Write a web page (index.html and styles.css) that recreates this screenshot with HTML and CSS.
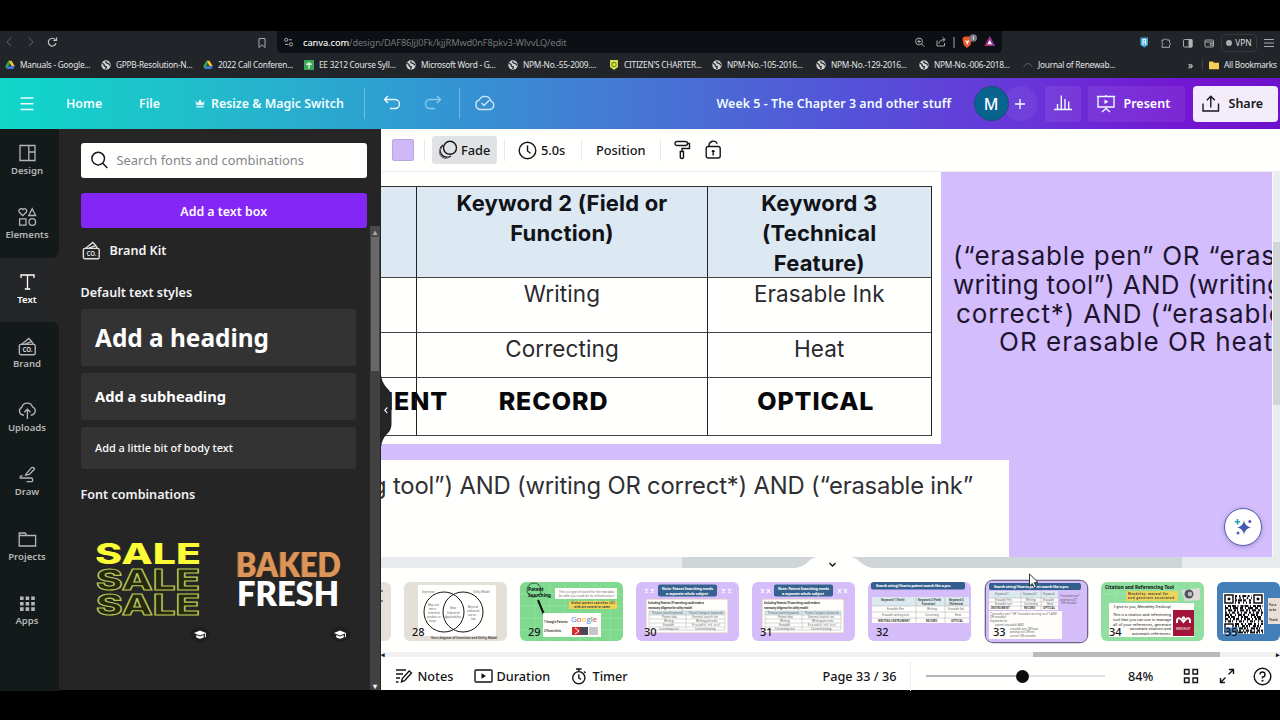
FILE: index.html
```html
<!DOCTYPE html>
<html lang="en">
<head>
<meta charset="utf-8">
<title>Week 5 - The Chapter 3 and other stuff</title>
<link rel="stylesheet" href="styles.css">
</head>
<body>
<svg class="defs" width="0" height="0">
  <defs>
    <symbol id="globe" viewBox="0 0 10 10"><circle cx="5" cy="5" r="4.7" fill="#d0d1d3"/><path d="M1 3.4Q3.5 4 3.2 5.2T5.4 7L4.6 9M5 1.2Q4.6 3 6.2 3.2T9 5.3" fill="none" stroke="#25282c" stroke-width="1.3"/></symbol>
    <symbol id="drive" viewBox="0 0 10 10"><path d="M3.4 .8H6.6L9.8 6.3H6.6Z" fill="#f6c326"/><path d="M3.4 .8L5 3.6L1.8 9L.2 6.3Z" fill="#2ba65a"/><path d="M3.4 6.3H9.8L8.2 9H1.8Z" fill="#3f7be8"/></symbol>
    <symbol id="co" viewBox="0 0 18 18"><rect x="1.3" y="7" width="15" height="9.8" rx="1.5"/><path d="M3.5 6.8L10.2 1.3L13 4.3M6.5 6.8L13 4.3L14.5 6.8"/><text x="9" y="14" class="co-text">CO.</text></symbol>
    <symbol id="cap" viewBox="0 0 22 16"><ellipse cx="11" cy="8" rx="11" ry="8" fill="#1c1e20"/><path d="M4.5 6.3L11 3.6L17.5 6.3L11 9Z" fill="#fff"/><path d="M7 8.5V11Q11 14 15 11V8.5L11 10.2Z" fill="#fff"/><path d="M16.8 6.5V11" stroke="#fff"/></symbol>
    <symbol id="mini-table" viewBox="0 0 82 34"><rect width="82" height="34" fill="#fffefb" stroke="#d9b998" stroke-width=".8"/><text x="2" y="5" textLength="56" class="ink b">Including Patents: IP searching could make a</text><text x="2" y="9.5" textLength="44" class="ink b">necessary diligence for utility model</text><rect x="3" y="12" width="76" height="4" fill="#d8e8ed"/><path d="M3 12H79V31H3ZM40 12V31M3 16H79M3 20H79M3 24H79M3 28H79" fill="none" stroke="#a9b4bb" stroke-width=".5"/><g class="ink"><text x="6" y="15" textLength="31">Previous search keywords</text><text x="43" y="15" textLength="34">Patent Category keywords</text><text x="16" y="19">Patent idea</text><text x="46" y="19" textLength="26">General search set</text><text x="18" y="23">Writing</text><text x="50" y="23">Writing pen sets</text><text x="17" y="27">Erasable</text><text x="46" y="27" textLength="28">Erasable ink tool</text><text x="13" y="30.5">Correcting tool</text><text x="49" y="30.5">Correct heating</text></g></symbol>
  </defs>
</svg>
<div class="screen">
  <header class="browser">
    <div class="nav-row">
      <div class="nav-left">
        <svg width="64" height="20" class="line dim"><path d="M11 6.5L7 10.8L11 15M29 6.5L33 10.8L29 15"/><path d="M55.4 8.8A3.9 3.9 0 1 0 56 12.3M56.5 6.5V9.5H53.3" stroke="#c6c8ca" stroke-width="1.2"/></svg>
        <svg width="12" height="14" class="line bookmark"><path d="M3 2.5H9V11.5L6 8.8L3 11.5Z"/></svg>
      </div>
      <div class="url-bar">
        <svg width="12" height="12" class="line"><circle cx="3.2" cy="3.8" r="1.6"/><path d="M6 3.8H9M2 8.4H5.5"/><circle cx="8" cy="8.4" r="1.6"/></svg>
        <span class="url"><b>canva.com</b>/design/DAF86JjJ0Fk/kjjRMwd0nF8pkv3-WlvvLQ/edit</span>
        <svg width="90" height="22" class="line url-icons"><circle cx="9" cy="10.5" r="3.4"/><path d="M11.6 13L14.2 15.6M7.2 10.5H10.8M9 8.7V12.3"/><path d="M27 9.5V15H34.5V12M29 12.5Q29 9 34.5 8.5M32.6 6.2L35.2 8.5L32.6 10.8"/><path d="M44 6V17"/><path d="M53 6.5L55 5.5H60L62 7.5L60.5 14L57 17L53.6 14L52.5 8Z" fill="#e8572d" stroke="none"/><path d="M55 9L57 10L59.4 9L57.4 14Z" fill="#fff" stroke="none"/><circle cx="63.3" cy="7" r="3.7" fill="#777b80" stroke="none"/><path d="M63.3 5.2V8.8" stroke="#eee"/><path d="M79.7 5L85 15H74.3Z" fill="#b52b74" stroke="none"/><path d="M79.7 5L85 15H79.7Z" fill="#7f3ca0" stroke="none"/><path d="M79.7 9L82 13.3H77.4Z" fill="#fff" stroke="none"/></svg>
      </div>
      <div class="extensions">
        <svg width="82" height="20" class="line"><path d="M3.5 4.5H11V12L7.3 14.5L3.5 12Z" fill="#45a8de" stroke="none"/><path d="M6 6V12M8.6 6V12M6 6.5H8.6M6 9H8.6" stroke="#fff"/><path d="M25 7H27A1.6 1.6 0 0 1 30 7H32.5V9.4A1.6 1.6 0 0 1 32.5 12.2V14.3H25V12.2A1.6 1.6 0 0 0 25 9.4Z"/><rect x="46.5" y="6.5" width="8.5" height="7.5" rx="1"/><path d="M52 6.5H55V14H52Z" fill="#b5b7ba"/><rect x="68" y="7" width="8.5" height="7" rx="1"/><path d="M68 9H76.5M73 10.7H76.5V12.2H73Z"/></svg>
        <span class="vpn"><i></i>VPN</span>
        <svg width="12" height="12" class="line"><path d="M1 2.5H11M1 6H11M1 9.5H11"/></svg>
      </div>
    </div>
    <nav class="bookmarks">
      <a class="w96"><svg><use href="#drive"/></svg>Manuals - Google...</a>
      <a class="w102"><svg><use href="#globe"/></svg>GPPB-Resolution-N...</a>
      <a class="w101"><svg><use href="#drive"/></svg>2022 Call Conferen...</a>
      <a class="w102"><svg viewBox="0 0 10 10"><rect width="10" height="10" fill="#3ca757"/><path d="M2 4.2H8M5 2V8.5" stroke="#fff" stroke-width="1.2"/></svg>EE 3212 Course Syll...</a>
      <a class="w102"><svg><use href="#globe"/></svg>Microsoft Word - G...</a>
      <a class="w101"><svg><use href="#globe"/></svg>NPM-No.-55-2009....</a>
      <a class="w103"><svg viewBox="0 0 10 10"><path d="M1 0H9V7L5 10L1 7Z" fill="#d7dd4a"/><circle cx="5" cy="4.5" r="2.2" fill="none" stroke="#59802e"/></svg>CITIZEN'S CHARTER...</a>
      <a class="w104"><svg><use href="#globe"/></svg>NPM-No.-105-2016...</a>
      <a class="w103"><svg><use href="#globe"/></svg>NPM-No.-129-2016...</a>
      <a class="w104"><svg><use href="#globe"/></svg>NPM-No.-006-2018...</a>
      <a class="w160"><svg viewBox="0 0 10 10"><path d="M.5 7Q5 0 9.5 7" fill="none" stroke="#5b5e61"/></svg>Journal of Renewab...</a>
      <span class="more">»</span>
      <a class="all"><svg viewBox="0 0 10 10"><path d="M0 1.5H4L5 2.7H10V9.3H0Z" fill="#f5cf52"/></svg>All Bookmarks</a>
    </nav>
  </header>

  <div class="topbar">
    <svg class="burger" width="14" height="14"><path d="M.5 1H13.5M.5 6.8H13.5M.5 12.5H13.5"/></svg>
    <span class="t home">Home</span><span class="t file">File</span>
    <svg class="crown" width="10" height="9"><path d="M.3 1.8L2.6 4L5 .2L7.4 4L9.7 1.8L8.7 6.3H1.3ZM1.3 7.2H8.7V8.4H1.3Z"/></svg>
    <span class="t resize">Resize &amp; Magic Switch</span>
    <i class="sep"></i>
    <svg class="undo" width="18" height="18"><path d="M5 1L1.5 4.5L5 8M1.5 4.5H12A4.5 4.5 0 0 1 12 13.5H7"/></svg>
    <svg class="redo" width="18" height="18"><path d="M13 1L16.5 4.5L13 8M16.5 4.5H6A4.5 4.5 0 0 0 6 13.5H11"/></svg>
    <i class="sep"></i>
    <svg class="cloud" width="20" height="17"><path d="M5 14.5H14.5A4.3 4.3 0 0 0 16 6.2A6.2 6.2 0 0 0 4.4 4.8A5 5 0 0 0 5 14.5M6.5 8L9 10.5L14.5 5"/></svg>
    <span class="t title">Week 5 - The Chapter 3 and other stuff</span>
    <span class="avatar">M</span><span class="plus"><svg width="12" height="12"><path d="M6 1V11M1 6H11"/></svg></span>
    <span class="btn chart"><svg width="18" height="17"><path d="M0 14.5H18M3.5 14.5V9M7.3 14.5V.5M11 14.5V4M14.7 14.5V6.5"/></svg></span>
    <span class="btn present"><svg width="20" height="18"><path d="M.8 1.5H19.2M2 1.5V12H18V1.5M10 0V1.5M10 12V14M6 17L10 13.5L14 17"/><path d="M8.5 4.5L12.5 6.8L8.5 9.1Z" fill="#fff" stroke="none"/></svg>Present</span>
    <span class="share"><svg width="18" height="18"><path d="M1 8.5V16H16.5V8.5M8.8 12.5V1.5M4.8 5.2L8.8 1.2L12.8 5.2"/></svg>Share</span>
  </div>

  <div class="body">
    <aside class="rail">
      <a><svg><path d="M2 1.5H17V16.5H2ZM10.8 1.5V16.5M10.8 8H17"/></svg>Design</a>
      <a><svg><path d="M4.8 7.7L1.4 4.3A2 2 0 0 1 4.8 1.5A2 2 0 0 1 8.2 4.3ZM14.2 .8L17.6 7.5H10.8ZM1.6 10.8H8V17.2H1.6Z"/><circle cx="14.3" cy="14" r="3.3"/></svg>Elements</a>
      <a class="on"><svg><path d="M3 5V2H16V5M9.5 2V16M6.8 16H12.2"/></svg>Text</a>
      <a><svg><use href="#co"/></svg>Brand</a>
      <a><svg><path d="M6 14H5A4 4 0 0 1 3.8 6.4A5.6 5.6 0 0 1 14.6 6A4.2 4.2 0 0 1 14 14H12.7M9.4 18V8.2M6.3 11.2L9.4 8.2L12.5 11.2"/></svg>Uploads</a>
      <a><svg><path d="M8 9.2L13.5 2.7Q16 1.7 16.5 4.2L11.3 9.4L7.6 10.2ZM4.5 10.7Q1.5 11 2.3 13H13.8Q15.8 15 13.8 16.7H8.5"/></svg>Draw</a>
      <a><svg><path d="M1.2 16V3H7.3L8.5 5.5H17.6V16ZM1.2 5.5H8.5"/></svg>Projects</a>
      <a><svg><path class="dots" d="M2 2.5h3.6v3.6H2zM7.6 2.5h3.6v3.6H7.6zM13.2 2.5h3.6v3.6H13.2zM2 7.9h3.6v3.6H2zM7.6 7.9h3.6v3.6H7.6zM13.2 7.9h3.6v3.6H13.2zM2 13.3h3.6v3.6H2zM7.6 13.3h3.6v3.6H7.6zM13.2 13.3h3.6v3.6H13.2z"/></svg>Apps</a>
    </aside>

    <section class="panel">
      <div class="panel-main">
        <div class="search"><svg width="18" height="18"><circle cx="7.2" cy="7.6" r="6.3"/><path d="M11.8 12.2L16.3 17"/></svg><span>Search fonts and combinations</span></div>
        <div class="add">Add a text box</div>
        <div class="kit"><svg width="18" height="18"><use href="#co"/></svg>Brand Kit</div>
        <h3>Default text styles</h3>
        <div class="card c1">Add a heading</div>
        <div class="card c2">Add a subheading</div>
        <div class="card c3">Add a little bit of body text</div>
        <h3 class="combo-title">Font combinations</h3>
        <div class="combos">
          <svg class="combo" width="134" height="110">
            <g class="wide"><text x="14" y="32" textLength="106" lengthAdjust="spacingAndGlyphs" fill="#fbfb36">SALE</text><text x="15" y="57.5" textLength="104" lengthAdjust="spacingAndGlyphs" class="outline">SALE</text><text x="15" y="82.5" textLength="104" lengthAdjust="spacingAndGlyphs" class="outline">SALE</text></g>
            <use href="#cap" x="108" y="95" width="22" height="15"/></svg>
          <svg class="combo" width="134" height="110">
            <g class="round"><text x="15" y="45" textLength="105" lengthAdjust="spacingAndGlyphs" class="baked">BAKED</text><text x="16" y="73.5" textLength="102" lengthAdjust="spacingAndGlyphs" fill="#fff">FRESH</text></g>
            <use href="#cap" x="108" y="95" width="22" height="15"/></svg>
        </div>
      </div>
      <div class="vscroll"><b>▴</b><i></i><em>▾</em></div>
    </section>

    <main class="editor">
      <div class="tools">
        <i class="swatch"></i><i class="tsep s1"></i>
        <span class="fade"><svg width="20" height="20"><circle cx="12" cy="7.8" r="6.5"/><path d="M5 5A6.3 6.3 0 0 0 13 16"/><path d="M2.8 8.5A6 6 0 0 0 10 17.6" stroke="#777"/></svg>Fade</span>
        <i class="tsep s2"></i>
        <span class="timing"><svg width="19" height="19"><circle cx="9.5" cy="9.5" r="8.3"/><path d="M9.5 4.5V10L12.5 12.3"/></svg>5.0s</span>
        <i class="tsep s3"></i><span class="pos">Position</span><i class="tsep s4"></i>
        <svg class="roller" width="18" height="20"><rect x="1" y="1.5" width="12.5" height="4" rx="2"/><path d="M13.5 3.5H15.5V8.5H8V11M6.3 11.5H9.5V17.5Q8 19.5 6.3 17.5Z"/></svg>
        <svg class="lock" width="17" height="20"><rect x="1.2" y="6.5" width="14" height="11.5" rx="2"/><path d="M4 6.5V5A4.3 4.3 0 0 1 12.2 3.7M8.2 12.5V15.5"/><circle cx="8.2" cy="11.3" r="1.4" fill="#111" stroke="none"/></svg>
      </div>
      <div class="stage">
        <div class="canvas">
          <div class="slide-left">
            <div class="sheet">
              <div class="tbl">
                <div class="cell hd"></div><div class="cell hd">Keyword 2 (Field or<br>Function)</div><div class="cell hd">Keyword 3<br>(Technical<br>Feature)</div>
                <div class="cell"></div><div class="cell">Writing</div><div class="cell">Erasable Ink</div>
                <div class="cell"></div><div class="cell">Correcting</div><div class="cell">Heat</div>
                <div class="cell ft spill"><span>MENT</span></div><div class="cell ft record">RECORD</div><div class="cell ft optical">OPTICAL</div>
              </div>
            </div>
            <div class="query"><span>g tool”) AND (writing OR correct*) AND (“erasable ink”</span></div>
          </div>
          <div class="note"><p class="l1">(“erasable pen” OR “eras</p><p class="l2">writing tool”) AND (writing</p><p class="l3">correct*) AND (“erasable</p><p class="l4">OR erasable OR heat</p></div>
          <span class="handle"><svg width="11" height="72"><path d="M0 0Q1 8 6 13Q10.5 17 10.5 23V49Q10.5 55 6 59Q1 64 0 72Z" fill="#252526"/><path d="M6.3 32.5L3.8 35.3L6.3 38" fill="none" stroke="#eee" stroke-width="1.2"/></svg></span>
          <span class="magic"><svg width="24" height="24"><path d="M13 5.5Q14 11.5 20 12.5Q14 13.5 13 19.5Q12 13.5 6 12.5Q12 11.5 13 5.5Z" fill="#4257b2"/><path d="M6.5 4V9.5M3.8 6.8H9.2" stroke="#2b9fb0" stroke-width="1.6"/><circle cx="18.8" cy="6.5" r="1.5" fill="#5b4bb0"/><circle cx="7" cy="18" r="1.5" fill="#4b62ad"/></svg></span>
        </div>
        <div class="cscroll"><i></i></div>
      </div>
      <div class="hscroll"><svg width="899" height="11"><rect x="301" width="500" height="11" fill="#d0d5d7"/><path d="M414 11Q422 10 428 4Q432 0 438 0H468Q474 0 478 4Q484 10 492 11Z" fill="#fffffe"/><path d="M448.5 6L451.5 9L454.5 6" fill="none" stroke="#111" stroke-width="1.3"/></svg></div>
      <div class="strip">
        <svg class="thumb part" width="9.5" height="59"><rect width="10" height="59" fill="#e5e0d9"/><path d="M1 8V20" stroke="#222" stroke-dasharray="2 8"/></svg>
        <svg class="thumb" width="103" height="59"><rect width="103" height="59" fill="#e4dfd7"/><rect x="14" y="3" width="78" height="51" fill="#fffffd"/><circle cx="40" cy="30" r="20" class="ring"/><circle cx="59" cy="30" r="20" class="ring"/><g class="ink"><text x="18" y="11">Invention</text><text x="69" y="11">Utility Model</text><text x="24" y="24">May use</text><text x="25" y="28">more</text><text x="24" y="32">inventive</text><text x="23" y="36">product or</text><text x="25" y="40">steps</text><text x="46" y="27">New</text><text x="43" y="32">Industrial</text><text x="41" y="36">Applicability</text><text x="64" y="26">Beyond</text><text x="63" y="30">industrial</text><text x="64" y="34">use at</text><text x="67" y="38">low</text></g><text x="27" y="57" textLength="66" class="ink b">Venn diagram of Invention and Utility Model</text><text x="8" y="53.5" class="n">28</text></svg>
        <svg class="thumb" width="103" height="59"><rect width="103" height="59" fill="#7fda90"/><path d="M0 12H103M0 24H103M0 36H103M0 48H103M15 0V59M30 0V59M45 0V59M60 0V59M75 0V59M90 0V59" stroke="#9be3a5" stroke-width=".6"/><circle cx="14" cy="8" r="7" fill="none" stroke="#222" stroke-width=".7"/><text x="8" y="9" class="bd">Patent</text><text x="8" y="14.5" class="bd">Searching</text><path d="M18 18L25 35" stroke="#111" stroke-width="2"/><rect x="35" y="6" width="62" height="11" fill="#fffefb"/><text x="39" y="10.5" class="ink" textLength="55">This is a type of search for the new data</text><text x="39" y="15" class="ink" textLength="55">be able you could do its infrastructure</text><rect x="49" y="19" width="48" height="8" fill="#f2d455"/><text x="51" y="22.2" class="ink b" textLength="44">Global patent searches (25)</text><text x="54" y="26" class="ink b" textLength="36">with are several or same</text><rect x="23" y="31" width="58" height="24" fill="#fffefb"/><text x="24" y="41" class="ink b">1 Google Patents</text><text x="24" y="49.5" class="ink b">2 Patentlink</text><text x="51" y="40" class="google"><tspan>G</tspan><tspan fill="#ea4335">o</tspan><tspan fill="#fbbc05">o</tspan><tspan>g</tspan><tspan fill="#34a853">l</tspan><tspan fill="#ea4335">e</tspan></text><rect x="52" y="45" width="8" height="8" fill="#d52c33"/><path d="M55 46L59 49L55 52" stroke="#fff" fill="none"/><rect x="60" y="45" width="8" height="8" fill="#4b4558"/><rect x="69" y="45" width="9" height="8" fill="#c6c4cb"/><text x="8" y="53.5" class="n">29</text></svg>
        <svg class="thumb" width="103" height="59"><rect width="103" height="59" fill="#d4bdf8"/><rect x="22" y="2.5" width="59" height="12" rx="2" fill="#35628f"/><text x="26" y="7.5" class="w" textLength="51">Note: Patent Searching needs</text><text x="30" y="12.5" class="w" textLength="42">a separate whole subject</text><path d="M9 7l3 4m0-4l-3 4M15 7l3 4m0-4l-3 4M86 7l3 4m0-4l-3 4M92 7l3 4m0-4l-3 4" stroke="#fff" stroke-width="1.2"/><use href="#mini-table" x="10" y="17" width="82" height="34"/><text x="8" y="53.5" class="n">30</text></svg>
        <svg class="thumb" width="103" height="59"><rect width="103" height="59" fill="#d4bdf8"/><rect x="22" y="2.5" width="59" height="12" rx="2" fill="#35628f"/><text x="26" y="7.5" class="w" textLength="51">Note: Patent Searching needs</text><text x="30" y="12.5" class="w" textLength="42">a separate whole subject</text><path d="M9 7l3 4m0-4l-3 4M15 7l3 4m0-4l-3 4M86 7l3 4m0-4l-3 4M92 7l3 4m0-4l-3 4" stroke="#fff" stroke-width="1.2"/><use href="#mini-table" x="10" y="17" width="82" height="34"/><text x="8" y="53.5" class="n">31</text></svg>
        <svg class="thumb" width="103" height="59"><rect width="103" height="59" fill="#d4bdf8"/><rect x="3" y="0" width="94" height="7.5" rx="2" fill="#335f8e"/><text x="8" y="5.3" class="w" textLength="75">Search string! How to patent search like a pro.</text><rect x="4" y="15" width="97" height="26" fill="#fffefb"/><rect x="4" y="15" width="97" height="9" fill="#dce9ef"/><path d="M4 24H101M4 30H101M4 36H101M48 15V41M77 15V41" stroke="#a5adb2" stroke-width=".5"/><g class="ink b"><text x="13" y="19">Keyword 1 (Tech)</text><text x="50" y="19">Keyword 2 (Field</text><text x="54" y="23">Function)</text><text x="81" y="19">Keyword 3</text><text x="81" y="23">(Technical</text></g><g class="ink"><text x="19" y="28">Erasable Pen</text><text x="59" y="28">Writing</text><text x="80" y="28">Erasable Ink</text><text x="14" y="34">Erasable writing tool</text><text x="57" y="34">Correcting</text><text x="87" y="34">Heat</text></g><g class="ink b"><text x="10" y="39.5">WRITING INSTRUMENT</text><text x="58" y="39.5">RECORD</text><text x="83" y="39.5">OPTICAL</text></g><text x="8" y="53.5" class="n">32</text></svg>
        <svg class="thumb current" width="101" height="61"><rect width="101" height="61" fill="#d4bdf8"/><rect x="3" y="2" width="92" height="7" rx="2" fill="#335f8e"/><text x="8" y="7" class="w" textLength="75">Search string! How to patent search like a pro.</text><rect x="3" y="10" width="69" height="19" fill="#fffefb"/><rect x="3" y="10" width="69" height="7" fill="#dce9ef"/><path d="M3 17H72M3 21H72M3 25H72M35 10V29M55 10V29" stroke="#a5adb2" stroke-width=".5"/><g class="ink"><text x="9" y="13.5">Keyword 1</text><text x="37" y="13.5">Keyword 2</text><text x="57" y="13.5">Keyword</text><text x="9" y="20">Erasable Pen</text><text x="40" y="20">Writing</text><text x="57" y="20">Erasable</text><text x="9" y="24">Erasable tool</text><text x="38" y="24">Correcting</text><text x="61" y="24">Heat</text><text x="74" y="16">(“erasable pen”</text><text x="74" y="19.5">writing tool”)</text><text x="75" y="23">OR erasable</text></g><g class="ink b"><text x="5" y="28">INSTRUMENT</text><text x="38" y="28">RECORD</text><text x="57" y="28">OPTICAL</text></g><rect x="3" y="30" width="73" height="28" fill="#fffefb"/><g class="ink"><text x="4" y="33.5" textLength="67">(“erasable pen” OR “erasable writing tool”) AND</text><text x="4" y="37">OR erasable</text><text x="4" y="41">Keywords list</text><text x="9" y="45">patent (erasable) AND</text><text x="24" y="48.5">erasable pen OR heat</text><text x="24" y="52">writing tool OR ink</text><text x="24" y="56">correct OR erasable</text></g><text x="7" y="54.5" class="n">33</text></svg>
        <svg class="thumb" width="103" height="59"><rect width="103" height="59" fill="#91dfa0"/><path d="M0 12H103M0 24H103M0 36H103M0 48H103M15 0V59M30 0V59M45 0V59M60 0V59M75 0V59M90 0V59" stroke="#a7e8af" stroke-width=".6"/><text x="4" y="7" class="bd" textLength="69">Citation and Referencing Tool</text><rect x="25" y="9" width="52" height="10" fill="#eed45b"/><text x="27" y="13" class="ink b" textLength="40">Mendeley: manual for</text><text x="27" y="17" class="ink b" textLength="46">and generate annotated</text><path d="M80 8L99 6V18L84 19Z" fill="#dedbd7"/><circle cx="88" cy="12" r="4.5" fill="#54545a"/><circle cx="89" cy="12" r="2.2" fill="#b7bdc5"/><rect x="8" y="21" width="85" height="34" fill="#fffefb"/><g class="md"><text x="13" y="26" textLength="57">I give to you, Mendeley Desktop!</text><text x="12" y="34" textLength="58">This is a citation and referencing</text><text x="12" y="38.8" textLength="58">tool that you can use to manage</text><text x="12" y="43.5" textLength="58">all of your references, generate</text><text x="29" y="48" textLength="41">automatic citations and</text><text x="31" y="53" textLength="39">automatic references.</text></g><rect x="72" y="28" width="21" height="26" fill="#a31538"/><path d="M76 41V38Q77 35 80 37L82.5 40L85 37Q88 35 89 38V41" stroke="#fff" stroke-width="2" fill="none"/><circle cx="82.5" cy="36" r="1.7" fill="#fff"/><text x="75" y="48" class="w light">MENDELEY</text><text x="8" y="53.5" class="n">34</text></svg>
        <svg class="thumb last" width="63" height="59"><rect width="63" height="59" fill="#447fba"/><rect x="6" y="11" width="41" height="41" fill="#fff"/><g class="qr"><path d="M18 14h17" stroke-dasharray="2 2 1.4 1.8 4 1.4"/><path d="M18 16.2h17" stroke-dasharray="1.4 3 1.4 2 1 3"/><path d="M18 18.4h17" stroke-dasharray="2 1 4 1 3 3"/><path d="M18 20.6h17" stroke-dasharray="1 2 2 3 1 2"/><path d="M8 24h38" stroke-dasharray="1 2 3 1 4 1.5"/><path d="M8 26.2h38" stroke-dasharray="3 2 1 2 5 2"/><path d="M8 28.4h38" stroke-dasharray="1 2 4 2 2 1"/><path d="M8 30.6h38" stroke-dasharray="2 2 1 2 3 2"/><path d="M8 32.8h38" stroke-dasharray="4 1 2 3 1 2"/><path d="M8 35h38" stroke-dasharray="1 2 2 1 4 3"/><path d="M8 37.2h38" stroke-dasharray="3 2 1 2 2 1"/><path d="M8 39.4h38" stroke-dasharray="1 2 3 1 1 3"/><path d="M18 42h28" stroke-dasharray="4 2 2 2 1 2"/><path d="M18 44.2h28" stroke-dasharray="2 1 1 3 3 1"/><path d="M18 46.4h28" stroke-dasharray="1 3 4 1 2 1"/><path d="M18 48.6h28" stroke-dasharray="3 1 2 2 1 2"/><path d="M18 50.5h28" stroke-dasharray="1 2 5 1 2 1"/></g><g class="finder"><rect x="8" y="13" width="8" height="8"/><rect x="37" y="13" width="8" height="8"/><rect x="8" y="42" width="8" height="8"/></g><path d="M10.7 15.7h2.6v2.6h-2.6zM39.7 15.7h2.6v2.6h-2.6z"/><rect x="51" y="16" width="12" height="26" fill="#e9dfd5"/><g class="ink b"><text x="52" y="24">Put a</text><text x="52" y="29">to be</text><text x="52" y="39">Thank</text></g><text x="8" y="53.5" class="n halo">35</text></svg>
        <svg class="cursor" width="12" height="17"><path d="M1.5 1V13L4.3 10.5L6.5 15L8.4 14L6.3 9.7L10 9.3Z"/></svg>
      </div>
      <div class="strip-scroll"><b>◂</b><i></i><b class="end">▸</b></div>
      <footer>
        <svg class="f1" width="18" height="16"><path d="M1 2H11M1 6H8M1 10H5M1 14H3.5M6.5 13.8L7.3 10.5L14.2 3L16.5 5L9.6 12.6Z"/></svg><span class="ft-t notes">Notes</span>
        <svg class="f2" width="19" height="14"><rect x="1" y="1" width="17" height="12" rx="1"/><path d="M7.5 4.3L12 7L7.5 9.7Z" fill="#111" stroke="none"/></svg><span class="ft-t dur">Duration</span>
        <svg class="f3" width="16" height="17"><circle cx="7.8" cy="9.7" r="6.1"/><path d="M5 1H10.6M7.8 1V3.5M7.8 6.2V9.8L10 11.5M13 3.5L14.5 5"/></svg><span class="ft-t timer">Timer</span>
        <span class="ft-t page">Page 33 / 36</span><i class="fsep"></i>
        <span class="slider"><i></i></span>
        <span class="ft-t pct">84%</span>
        <svg class="f4" width="16" height="16"><path d="M1.5 1.5H6V6H1.5ZM10 1.5H14.5V6H10ZM1.5 10H6V14.5H1.5ZM10 10H14.5V14.5H10Z"/></svg>
        <svg class="f5" width="16" height="16"><path d="M10 1.5H14.5V6M14.5 1.5L9.5 6.5M1.5 10V14.5H6M1.5 14.5L6.5 9.5"/></svg>
        <svg class="f6" width="19" height="19"><circle cx="9.5" cy="9.5" r="8.3"/><path d="M7 7.5A2.5 2.5 0 1 1 9.5 10V11.5"/><circle cx="9.5" cy="13.8" r="1" fill="#111" stroke="none"/></svg>
      </footer>
    </main>
  </div>
</div>
</body>
</html>
```
FILE: styles.css
```css
* { box-sizing: border-box; }
body { margin: 0; background: #000; font-family: "Noto Sans", "Open Sans", sans-serif; }
svg { flex: none; display: block; overflow: visible; }
i, em, b { font-style: normal; }
.defs { position: absolute; }
.screen { width: 1280px; height: 720px; padding: 31px 0 30px; overflow: hidden; display: flex; flex-direction: column; background: #000; }
.line { fill: none; stroke: #a9abae; stroke-width: 1; }
.dim { stroke: #65686b; }

/* browser chrome */
.browser { height: 47px; flex: none; background: #212529; color: #e3e4e5; }
.nav-row { height: 23px; display: flex; }
.nav-left { width: 277px; flex: none; display: flex; justify-content: space-between; padding-right: 9px; }
.bookmark { margin-top: 5px; }
.url-bar { width: 725px; flex: none; height: 22px; background: #0c0f13; border-radius: 0 0 5px 5px; display: flex; align-items: center; padding-left: 6px; }
.url { margin-left: 8px; width: 607px; font-size: 9.2px; letter-spacing: -.1px; color: #74777a; white-space: nowrap; }
.url b { font-weight: 500; color: #f3f3f3; }
.url-icons { stroke: #a9abae; }
.extensions { flex: 1; display: flex; align-items: center; padding-left: 135px; }
.extensions svg:first-child { margin-right: 2px; }
.vpn { width: 36px; height: 18px; margin-right: 6px; border: 1px solid #34383c; border-radius: 4px; font-size: 8.4px; display: flex; align-items: center; justify-content: center; gap: 3px; color: #ddd; }
.vpn i { width: 6px; height: 6px; border-radius: 50%; background: #aaa; }
.bookmarks { height: 21px; display: flex; align-items: center; padding-left: 5px; font-size: 8.3px; letter-spacing: -.24px; }
.bookmarks a { display: flex; align-items: center; gap: 5px; white-space: nowrap; flex: none; }
.bookmarks svg { width: 10px; height: 10px; }
.w96 { width: 96px; } .w101 { width: 101px; } .w102 { width: 102px; } .w103 { width: 103px; } .w104 { width: 104px; } .w160 { width: 165px; }
.more { width: 14px; font-size: 10px; }
.all { border-left: 1px solid #3c4044; padding-left: 6px; }

/* editor header */
.topbar { height: 51px; flex: none; display: flex; align-items: center; color: #fff; background: linear-gradient(90deg, #0fd7c9 0%, #22bccb 16%, #3199d2 33%, #4676d4 50%, #5551d8 67%, #6935d9 80%, #7417d2 92%, #6d12ca 100%); }
.topbar svg { fill: none; stroke: #eefaff; stroke-width: 1.4; }
.t { font-size: 12.4px; font-weight: 600; white-space: nowrap; flex: none; color: #f1fdff; }
.burger { margin-left: 20px; }
.home { margin-left: 32px; width: 73px; }
.file { width: 56px; }
.topbar .crown { fill: #dff7fa; stroke: none; }
.resize { margin-left: 6px; width: 153px; }
.sep { width: 1px; height: 31px; background: #ffffff50; }
.undo { margin-left: 18px; }
.topbar .redo { margin: 0 17px 0 23px; stroke: #8dc9ec; }
.topbar .cloud { margin-left: 15px; stroke: #cfe7f8; }
.title { margin-left: 221.5px; width: 257px; letter-spacing: .06px; }
.avatar { width: 35px; height: 35px; border-radius: 50%; background: #08648e; border: 1px solid #22477f; display: flex; align-items: center; justify-content: center; font-size: 16px; font-weight: 500; z-index: 1; }
.plus { width: 35px; height: 35px; margin-left: -6px; border-radius: 50%; background: #ffffff0e; display: flex; align-items: center; justify-content: center; }
.btn { height: 36px; background: #ffffff12; border-radius: 3px; display: flex; align-items: center; justify-content: center; }
.chart { width: 36px; margin-left: 7px; }
.present { width: 97px; margin-left: 7px; justify-content: flex-start; padding-left: 8px; gap: 8px; font-size: 12.5px; font-weight: 600; }
.share { width: 85px; height: 36px; margin-left: 8px; background: #f3ecfa; border-radius: 4px; color: #18171b; display: flex; align-items: center; padding-left: 9px; gap: 9px; font-size: 12.5px; font-weight: 600; }
.topbar .share svg { stroke: #18171b; }

.body { flex: 1; display: flex; min-height: 0; }

/* category rail */
.rail { width: 59px; flex: none; background: #252627; }
.rail a { height: 64.3px; display: flex; flex-direction: column; align-items: center; padding: 15px 5px 0 0; gap: 1px; font-size: 9.6px; line-height: 13px; font-weight: 600; color: #b3b6b7; background: #14191a; white-space: nowrap; }
.rail svg, .kit svg { width: 19px; height: 19px; fill: none; stroke: #b3b6b7; stroke-width: 1.3; }
.rail .dots { fill: #b3b6b7; stroke: none; }
.rail a.on { background: #252627; color: #fff; }
.rail a.on svg { stroke: #fff; }
.rail a:nth-child(2) { border-radius: 0 0 7px 0; }
.rail a:nth-child(4) { border-radius: 0 7px 0 0; }
.rail a:last-child { height: 112px; }
.co-text { font: 700 5.8px "Noto Sans", sans-serif; text-anchor: middle; fill: #cfd0d1; stroke: none; }

/* text panel */
.panel { width: 322px; flex: none; background: #252526; display: flex; color: #f3f3f3; font-weight: 600; }
.panel-main { width: 311px; padding: 14px 3px 0 21.5px; }
.search { height: 35px; background: #fffffe; border-radius: 3px; display: flex; align-items: center; padding: 0 0 1px 10px; gap: 8px; color: #85868a; font-weight: 400; font-size: 12.9px; white-space: nowrap; }
.search svg { fill: none; stroke: #17181a; stroke-width: 1.5; }
.add { margin-top: 15px; height: 35px; border-radius: 3px; background: #8426f5; display: flex; align-items: center; justify-content: center; font-size: 12.4px; padding-top: 1px; color: #fff; }
.kit { height: 44px; display: flex; align-items: center; gap: 8.5px; padding-left: 1.5px; font-size: 12.6px; }
.kit svg { stroke: #e0e0e0; }
h3 { margin: 12px 0 8px; height: 17px; line-height: 17px; font-size: 12.6px; font-weight: 600; white-space: nowrap; }
.card { width: 275px; background: #333334; border-radius: 3px; padding-left: 14.5px; display: flex; align-items: center; margin-bottom: 7px; white-space: nowrap; color: #fff; }
.c1 { height: 57px; font-size: 24.4px; font-weight: 700; }
.c2 { height: 47px; font-size: 14.7px; font-weight: 700; padding-bottom: 2px; }
.c3 { height: 42px; font-size: 10.9px; font-weight: 500; padding-bottom: 1px; }
.combo-title { margin-top: 17px; }
.combos { display: flex; gap: 6.5px; margin-top: 29px; }
.wide { font: 800 28.5px Inter, sans-serif; }
.outline { fill: #26290f; stroke: #b7c455; stroke-width: 1.1; }
.round { font: 800 34px Lato, sans-serif; }
.baked { fill: #dc9558; text-shadow: -1px 0 #8b4a29; }
.vscroll { width: 10px; margin-top: 97px; background: #414142; display: flex; flex-direction: column; align-items: center; font-size: 8px; }
.vscroll b { height: 11px; line-height: 11px; color: #aaa; width: 10px; text-align: center; background: #4a4a4a; }
.vscroll i { width: 8px; height: 134px; background: #686869; }
.vscroll em { margin-top: auto; line-height: 8px; }

/* editor */
.editor { flex: 1; min-width: 0; background: #fffffd; display: flex; flex-direction: column; color: #151519; }
.tools { height: 43px; flex: none; display: flex; align-items: center; font-size: 12.8px; font-weight: 500; border-bottom: 1px solid #ebecef; }
.tools svg, footer svg { fill: none; stroke: #151519; stroke-width: 1.4; }
.swatch { width: 22px; height: 22px; margin-left: 11px; border-radius: 2px; background: #cfb8f6; border: 1px solid #bba6e4; }
.tsep { width: 1px; height: 21px; background: #e8e8ea; }
.s1 { margin-left: 10px; }
.fade { width: 65px; height: 28px; margin-left: 7px; background: #e0e2e4; border-radius: 3px; display: flex; align-items: center; padding-left: 6px; gap: 3px; }
.s2 { margin-left: 7px; }
.timing { width: 63px; margin-left: 13px; display: flex; align-items: center; gap: 4px; white-space: nowrap; }
.pos { width: 50px; margin: 0 14px 0 14px; white-space: nowrap; }
.roller { margin-left: 13px; }
.lock { margin-left: 12.5px; }
.stage { height: 385px; flex: none; display: flex; }
.canvas { width: 891px; position: relative; background: #d3bdfc; overflow: hidden; display: flex; }
.slide-left { width: 628px; flex: none; }
.sheet { width: 559.5px; height: 271.5px; background: #fffffd; padding-top: 14px; }
.tbl { width: 550.5px; display: grid; grid-template-columns: 36px 291px 223.5px; grid-template-rows: 91px 55px 44.5px 58px; border-top: 1.5px solid #333; }
.cell { border-right: 1.5px solid #222; border-bottom: 1.5px solid #444; font: 400 22.5px/30.3px Inter, sans-serif; letter-spacing: .1px; text-align: center; color: #2a2a2e; white-space: nowrap; padding-top: 1px; }
.hd { background: #dce8f2; font-weight: 700; color: #111318; letter-spacing: .18px; font-size: 22px; padding-top: .7px; }
.ft { font-weight: 800; font-size: 25px; color: #08080a; letter-spacing: .9px; padding-top: 8px; }
.spill { display: flex; justify-content: flex-end; }
.spill span { margin-right: -32px; }
.record { padding-right: 17px; }
.optical { padding-right: 7px; }
.query { margin-top: 16.5px; height: 97px; background: #fffffd; overflow: hidden; display: flex; justify-content: flex-end; padding: 10px 36px 0 0; font: 400 23.8px/32px Inter, sans-serif; letter-spacing: -.18px; color: #303034; white-space: nowrap; }
.note { margin-left: -56px; padding-top: 70px; font: 400 26px/28.8px Inter, sans-serif; color: #1d1430; white-space: nowrap; }
.note p { margin: 0; }
.l1 { letter-spacing: .75px; }
.l2 { letter-spacing: .3px; }
.l3 { padding-left: 3px; letter-spacing: .9px; }
.l4 { padding-left: 46px; letter-spacing: 1.05px; }
.handle { position: absolute; left: 0; top: 203px; }
.magic { position: absolute; right: 10px; bottom: 11px; width: 38px; height: 38px; border: 1.5px solid #4f62a8; border-radius: 50%; background: #fff; display: flex; align-items: center; justify-content: center; box-shadow: 0 1px 4px #5a479966; }
.cscroll { flex: 1; background: #ebedee; border-left: 1px solid #f8f8f8; padding-top: 70px; }
.cscroll i { display: block; height: 163px; background: #d0d5d7; }
.hscroll { height: 11px; flex: none; background: #e8ebed; }

/* page strip */
.strip { height: 82px; flex: none; display: flex; gap: 13.2px; padding-top: 14px; overflow: hidden; position: relative; }
.thumb { border-radius: 6px; overflow: hidden; }
.part { border-radius: 0 6px 6px 0; }
.current { margin: -1px 1px 0; border-radius: 7px; box-shadow: 0 0 0 1.3px #6c6488; }
.ring { fill: none; stroke: #151515; stroke-width: 1; }
.n { font: 500 11px "Noto Sans", sans-serif; fill: #16141c; }
.halo { stroke: #447fba; stroke-width: 2px; paint-order: stroke; }
.ink { font: 400 2.8px "Noto Sans", sans-serif; fill: #5b5d62; }
.ink.b { font-weight: 700; fill: #3c3c3c; }
.bd { font: 800 4.6px "Noto Sans", sans-serif; fill: #14231a; }
.md { font: 500 3.7px "Noto Sans", sans-serif; fill: #333; }
.w { font: 800 3.4px "Noto Sans", sans-serif; fill: #fff; }
.light { font-size: 2.8px; font-weight: 400; }
.google { font: 500 8px "Open Sans", sans-serif; fill: #4285f4; }
.qr { stroke: #101216; stroke-width: 2.2; }
.finder { fill: #fff; stroke: #101216; stroke-width: 1.5; }
.cursor { position: absolute; left: 647px; top: 5px; fill: #fff; stroke: #333; }
.strip-scroll { height: 10px; flex: none; display: flex; align-items: center; font-size: 7px; line-height: 8px; background: linear-gradient(#fffffd 2px, #f0f1f0 2px, #f0f1f0 7px, #fffffd 7px); }
.strip-scroll b { width: 6px; flex: none; }
.strip-scroll i { width: 187px; height: 5px; background: #b9bbbb; margin: 0 0 2px 646px; flex: none; }
.strip-scroll .end { margin-left: auto; width: 4px; }
footer { height: 31px; flex: none; display: flex; align-items: center; padding-top: 1px; }
.ft-t { font-size: 12.7px; font-weight: 500; white-space: nowrap; flex: none; }
.f1 { margin-left: 14px; }
.notes { margin-left: 4.5px; width: 56px; }
.dur { margin-left: 4px; width: 74px; }
.timer { margin-left: 6px; width: 230px; }
.page { width: 87.5px; }
.fsep { width: 1px; height: 30px; background: #f0f0f0; }
.slider { width: 179px; height: 13px; margin-left: 15px; display: flex; align-items: center; background: linear-gradient(90deg, #b4b5b8 0 90px, #e1e2e4 90px) center / 100% 2px no-repeat; }
.slider i { width: 13px; height: 13px; margin-left: 90px; border-radius: 50%; background: #0c0c0e; }
.pct { margin-left: 23px; width: 55px; }
.f5 { margin-left: 20px; }
.f6 { margin-left: 18px; }
```
